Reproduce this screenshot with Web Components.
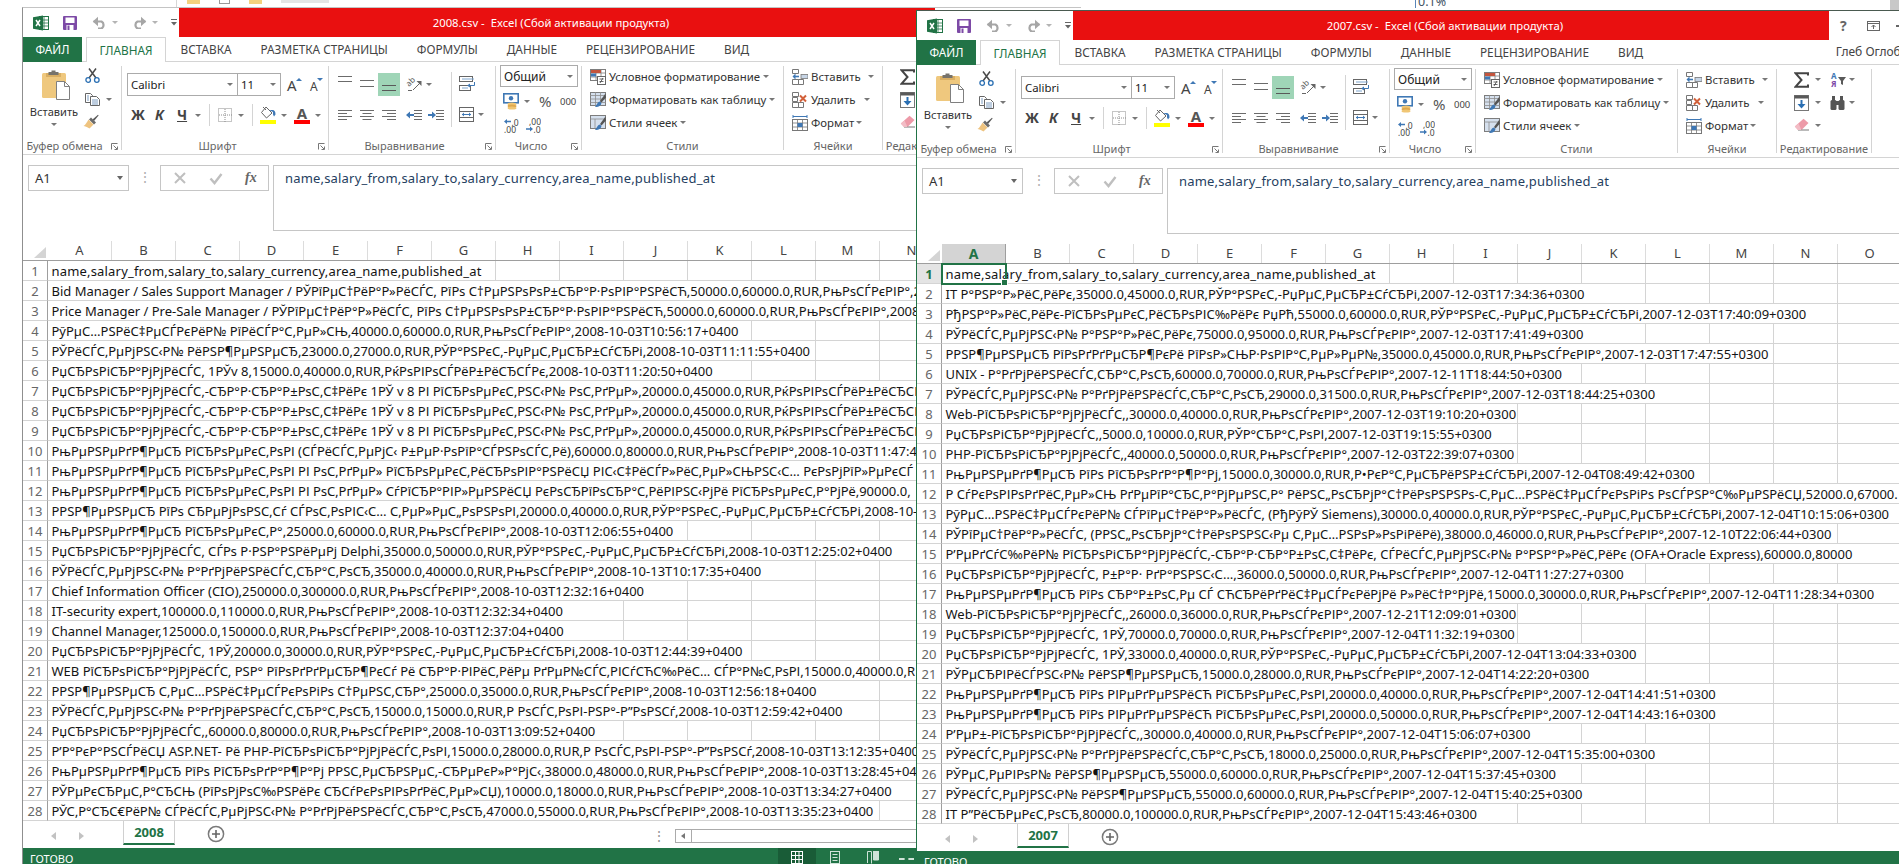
<!doctype html>
<html lang="ru"><head><meta charset="utf-8"><title>Excel</title>
<style>
html,body{margin:0;height:864px;overflow:hidden;background:#fff;font-family:"Noto Sans",sans-serif}
xl-window{position:absolute}
#w8{left:22px;top:7px;width:1059px;--edge:#8f8f8f;--topedge:#c4c4c4}
#w7{left:916px;top:10px;width:1100px;--edge:#217346;--topedge:#4a5a50}
</style></head><body>
<xl-backdrop></xl-backdrop>
<xl-window id="w8" file="2008.csv" sheet="2008"></xl-window>
<xl-window id="w7" file="2007.csv" sheet="2007" active></xl-window>
<script>
const cp="ЂЃ‚ѓ„…†‡€‰Љ‹ЊЌЋЏђ‘’“”•–—\u0098™љ›њќћџ\u00a0ЎўЈ¤Ґ¦§Ё©Є«¬\u00ad®Ї°±Ііґµ¶·ё№є»јЅѕї";
function mj(s){let o='';for(const b of new TextEncoder().encode(s)){if(b<128)o+=String.fromCharCode(b);else if(b<192){const c=cp[b-128];if(c!='\u0098')o+=c}else o+=String.fromCharCode(0x410+b-192)}return o}
const HEAD='name,salary_from,salary_to,salary_currency,area_name,published_at';
const DATA={
'2008':[
'Bid Manager / Sales Support Manager / Специалист по ценообразованию,50000.0,60000.0,RUR,Москва,2',
'Price Manager / Pre-Sale Manager / Специалист по ценообразованию,50000.0,60000.0,RUR,Москва,2008',
'Технический писатель,40000.0,60000.0,RUR,Москва,2008-10-03T10:56:17+0400',
'Системный инженер,23000.0,27000.0,RUR,Санкт-Петербург,2008-10-03T11:11:55+0400',
'Программист 1Сv 8,15000.0,40000.0,RUR,Новосибирск,2008-10-03T11:20:50+0400',
'Программист-разработчик 1С v 8 в проектный отдел,20000.0,45000.0,RUR,Новосибирс',
'Программист-разработчик 1С v 8 в проектный отдел,20000.0,45000.0,RUR,Новосибирс',
'Программист-разработчик 1С v 8 в проектный отдел,20000.0,45000.0,RUR,Новосибирс',
'Менеджер проектов (системы безопасности),60000.0,80000.0,RUR,Москва,2008-10-03T11:47:4',
'Менеджер проектов в отдел проектирования вычислительных комплекс',
'Менеджер проектов в отдел управления корпоративными проектами,90000.0,',
'Инженер по ремонту сотовых телефонов,20000.0,40000.0,RUR,Санкт-Петербург,2008-10-',
'Менеджер проекта,25000.0,60000.0,RUR,Москва,2008-10-03T12:06:55+0400',
'Программист со знанием Delphi,35000.0,50000.0,RUR,Санкт-Петербург,2008-10-03T12:25:02+0400',
'Системный администратор,35000.0,40000.0,RUR,Москва,2008-10-13T10:17:35+0400',
'Chief Information Officer (CIO),250000.0,300000.0,RUR,Москва,2008-10-03T12:32:16+0400',
'IT-security expert,100000.0,110000.0,RUR,Москва,2008-10-03T12:32:34+0400',
'Channel Manager,125000.0,150000.0,RUR,Москва,2008-10-03T12:37:04+0400',
'Программист 1С,20000.0,30000.0,RUR,Санкт-Петербург,2008-10-03T12:44:39+0400',
'WEB программист на поддержку и развитие действующих сайтов,15000.0,40000.0,R',
'Инженер технического центра,25000.0,35000.0,RUR,Москва,2008-10-03T12:56:18+0400',
'Системный администратор,15000.0,15000.0,RUR,Ростов-на-Дону,2008-10-03T12:59:42+0400',
'Программист,60000.0,80000.0,RUR,Москва,2008-10-03T13:09:52+0400',
'Вакансия ASP.NET- и PHP-программистов,15000.0,28000.0,RUR,Ростов-на-Дону,2008-10-03T13:12:35+0400',
'Менеджер по продажам Интернет-рекламы,38000.0,48000.0,RUR,Москва,2008-10-03T13:28:45+040',
'Секретарь (помощник руководителя),10000.0,18000.0,RUR,Москва,2008-10-03T13:34:27+0400',
'Старший системный администратор,47000.0,55000.0,RUR,Москва,2008-10-03T13:35:23+0400'],
'2007':[
'IT аналитик,35000.0,45000.0,RUR,Санкт-Петербург,2007-12-03T17:34:36+0300',
'Аналитик-проектировщик ПО,55000.0,60000.0,RUR,Санкт-Петербург,2007-12-03T17:40:09+0300',
'Системный аналитик,75000.0,95000.0,RUR,Москва,2007-12-03T17:41:49+0300',
'Инженер поддержки пользователей,35000.0,45000.0,RUR,Москва,2007-12-03T17:47:55+0300',
'UNIX - администратор,60000.0,70000.0,RUR,Москва,2007-12-11T18:44:50+0300',
'Системный администратор,29000.0,31500.0,RUR,Москва,2007-12-03T18:44:25+0300',
'Web-программист,30000.0,40000.0,RUR,Москва,2007-12-03T19:10:20+0300',
'Программист,5000.0,10000.0,RUR,Саратов,2007-12-03T19:15:55+0300',
'PHP-программист,40000.0,50000.0,RUR,Москва,2007-12-03T22:39:07+0300',
'Менеджер по продажам,15000.0,30000.0,RUR,Екатеринбург,2007-12-04T08:49:42+0300',
'Руководитель департамента информационно-технического оснащения,52000.0,67000.',
'Технический специалист (АТС Siemens),30000.0,40000.0,RUR,Санкт-Петербург,2007-12-04T10:15:06+0300',
'Специалист (Информационные технологии),38000.0,46000.0,RUR,Москва,2007-12-10T22:06:44+0300',
'Ведущий программист-разработчик, системный аналитик (OFA+Oracle Express),60000.0,80000',
'Программист баз данных,36000.0,50000.0,RUR,Москва,2007-12-04T11:27:27+0300',
'Менеджер по работе с юридическими лицами,15000.0,30000.0,RUR,Москва,2007-12-04T11:28:34+0300',
'Web-программист,26000.0,36000.0,RUR,Москва,2007-12-21T12:09:01+0300',
'Программист 1С,70000.0,70000.0,RUR,Москва,2007-12-04T11:32:19+0300',
'Программист 1С,33000.0,40000.0,RUR,Санкт-Петербург,2007-12-04T13:04:33+0300',
'Сервисный инженер,15000.0,28000.0,RUR,Москва,2007-12-04T14:22:20+0300',
'Менеджер по ведению проектов,20000.0,40000.0,RUR,Москва,2007-12-04T14:41:51+0300',
'Менеджер по ведению проектов,20000.0,50000.0,RUR,Москва,2007-12-04T14:43:16+0300',
'Веб-программист,30000.0,40000.0,RUR,Москва,2007-12-04T15:06:07+0300',
'Системный администратор,18000.0,25000.0,RUR,Москва,2007-12-04T15:35:00+0300',
'Сетевой инженер,55000.0,60000.0,RUR,Москва,2007-12-04T15:37:45+0300',
'Системный инженер,55000.0,60000.0,RUR,Москва,2007-12-04T15:40:25+0300',
'IT Директор,80000.0,100000.0,RUR,Москва,2007-12-04T15:43:46+0300']};

const svg=(w,h,b)=>`<svg width="${w}" height="${h}" viewBox="0 0 ${w} ${h}" style="display:block;flex:none">${b}</svg>`;
const L='stroke="#6b6b6b" fill="none"';
const I={
excel:svg(16,16,`<rect x="6.5" y="1.5" width="9" height="13" fill="#fff" stroke="#217346"/><path d="M7 5h8M7 8h8M7 11h8M11 2v12" stroke="#217346" stroke-width=".8"/><path d="M0 2.2 10 .4v15.2L0 13.8z" fill="#217346"/><path d="M3 5l4 6M7 5l-4 6" stroke="#fff" stroke-width="1.5"/>`),
save:svg(14,14,`<rect width="14" height="14" rx="1" fill="#7d4aa6"/><rect x="2.5" y="1.5" width="9" height="5.5" fill="#fff"/><rect x="3.5" y="9" width="7" height="5" fill="#fff"/><rect x="4.5" y="9.5" width="2" height="4.5" fill="#7d4aa6"/>`),
undo:svg(15,13,`<path d="M1.5 5.5h8a4 4 0 0 1 0 7H6" fill="none" stroke="#a6a6a6" stroke-width="2.2"/><path d="M6 .8 .8 5.5 6 10.2z" fill="#a6a6a6"/>`),
redo:svg(15,13,`<path d="M13.5 5.5h-8a4 4 0 0 0 0 7H9" fill="none" stroke="#a6a6a6" stroke-width="2.2"/><path d="M9 .8 14.2 5.5 9 10.2z" fill="#a6a6a6"/>`),
qat:svg(6,7,`<path d="M0 .5h6" stroke="#666"/><path d="M0 3h6L3 6.5z" fill="#666"/>`),
paste:svg(28,30,`<rect y="3" width="24" height="25" rx="1.5" fill="#efc87e"/><rect x="4" y="3" width="15" height="4" fill="#d9ae62"/><path d="M6.5 5V2h3V.5h4V2h3v3z" fill="#77736b"/><path d="M14.5 11.5h8l5 5v13h-13z" fill="#fff" stroke="#7f7f7f"/><path d="M22.5 11.5v5h5" fill="none" stroke="#7f7f7f"/>`),
cut:svg(15,15,`<path d="M4 10 11 .5M11 10 4 .5" stroke="#4a4a4a" stroke-width="1.5"/><circle cx="3.2" cy="12" r="2.3" fill="none" stroke="#2a6fb3" stroke-width="1.3"/><circle cx="11.8" cy="12" r="2.3" fill="none" stroke="#2a6fb3" stroke-width="1.3"/>`),
copy:svg(15,13,`<path d="M.5.5h5l2 2v7h-7z" fill="#fff" stroke="#666"/><path d="M5.5 3.5h6l3 3v6h-9z" fill="#fff" stroke="#666"/><path d="M7 7h6M7 9h6M7 11h6M2 3h2M2 5h2M2 7h2" stroke="#7d9cc0"/>`),
brush:svg(16,15,`<path d="M9.5 5.5 15 .8l.6.6L11 7z" fill="#5a5a5a"/><path d="M8 3.5l5 5-2 2-5-5z" fill="#6b6b6b"/><path d="M5.5 5.5l5 5-4 4C4 13 2 12 .5 12c2-1 3.5-4 5-6.5z" fill="#eec37f"/>`),
launch:svg(7,7,`<path d="M.5 6.5v-6h6" fill="none" stroke="#777"/><path d="M2.5 2.5l3.5 3.5M6.5 3.5v3h-3" fill="none" stroke="#777"/>`),
border:svg(14,15,`<rect x=".5" y=".5" width="13" height="13" fill="none" stroke="#8d8d8d" stroke-dasharray="1 1"/><path d="M7 1v13M1 7h13" stroke="#8d8d8d" stroke-dasharray="1 1"/>`),
fill:svg(16,14,`<path d="M6 1 1.5 6.5 6.5 12 12 7z" fill="#fff" stroke="#666"/><path d="M3 1 6 4" stroke="#666"/><path d="M9 4h3.5c2 0 3 1.5 3 4.5l-1.5 2-1-2L13 6z" fill="#3f78b5"/>`),
t:svg(14,23,`<path d="M0 3.5h14M0 8.5h14" ${L}/>`),
m:svg(14,23,`<path d="M0 7.5h14M0 13.5h14" ${L}/>`),
b:svg(14,23,`<path d="M0 12.5h14M0 17.5h14" stroke="#595959" fill="none"/>`),
al:svg(14,14,`<path d="M0 2.5h14M0 5.5h9M0 8.5h14M0 11.5h9" ${L}/>`),
ac:svg(14,14,`<path d="M0 2.5h14M2.5 5.5h9M0 8.5h14M2.5 11.5h9" ${L}/>`),
ar:svg(14,14,`<path d="M0 2.5h14M5 5.5h9M0 8.5h14M5 11.5h9" ${L}/>`),
ind1:svg(16,14,`<path d="M8 2.5h8M8 5.5h8M8 8.5h8M8 11.5h8" ${L}/><path d="M0 7l4-3.5V6h4v2H4v2.5z" fill="#3f78b5"/>`),
ind2:svg(16,14,`<path d="M8 2.5h8M8 5.5h8M8 8.5h8M8 11.5h8" ${L}/><path d="M8 7 4 3.5V6H0v2h4v2.5z" fill="#3f78b5"/>`),
orient:svg(16,16,`<text transform="translate(3 10) rotate(-45)" font-size="8" font-family="Noto Sans" fill="#555">ab</text><path d="M2 13.5h4M7 13l7-7" stroke="#666" fill="none"/><path d="M15.5 4v5l-5-5z" fill="#666"/>`),
wrap:svg(16,16,`<rect x=".5" y=".5" width="13" height="5" fill="none" stroke="#666"/><rect x=".5" y="9.5" width="11" height="5" fill="none" stroke="#666"/><path d="M3 3h12M3 12h6" stroke="#7fa6cf"/><path d="M15.5 6v3.5H9" stroke="#3f78b5" fill="none"/><path d="M11 7.5 8 9.5l3 2z" fill="#3f78b5"/>`),
merge:svg(15,15,`<rect x=".5" y=".5" width="14" height="14" fill="#fff" stroke="#666"/><path d="M0 4.5h15M0 10.5h15" stroke="#666"/><path d="M3 7.5h9" stroke="#3f78b5"/><path d="M5 5.5 3 7.5l2 2zM10 5.5l2 2-2 2z" fill="#3f78b5"/>`),
cur:svg(16,17,`<rect x=".8" y=".8" width="14.4" height="9" fill="#fff" stroke="#3f78b5" stroke-width="1.6"/><circle cx="8" cy="5.3" r="2.2" fill="#3f78b5"/><ellipse cx="9" cy="11" rx="4.5" ry="1.6" fill="#f0c674"/><ellipse cx="9" cy="13" rx="4.5" ry="1.6" fill="#dfa94e"/><ellipse cx="9" cy="15" rx="4.5" ry="1.6" fill="#f0c674"/>`),
incdec:svg(15,15,`<path d="M0 3.5 3 1v1.8h4v1.4H3V6z" fill="#3f78b5"/><text x="7.5" y="7.5" font-size="8.5" font-family="Noto Sans" fill="#444">,0</text><text x="0" y="14.5" font-size="8.5" font-family="Noto Sans" fill="#444">,00</text>`),
decdec:svg(15,15,`<text x="3" y="7" font-size="8.5" font-family="Noto Sans" fill="#444">,00</text><path d="M7 11 4 8.5v1.8H0v1.4h4v1.8z" fill="#3f78b5"/><text x="7.5" y="14.5" font-size="8.5" font-family="Noto Sans" fill="#444">,0</text>`),
cf:svg(16,16,`<rect x=".5" y=".5" width="15" height="11" fill="#fff" stroke="#7d7d7d"/><path d="M0 4h15M6 0v11M11 0v11M0 8h10" stroke="#7d7d7d" stroke-width=".8"/><rect x="1" y="1" width="10" height="3" fill="#c4553d"/><rect x="1" y="4.5" width="5" height="3" fill="#3f78b5"/><rect x="7.5" y="7.5" width="8" height="8" fill="#fff" stroke="#666"/><path d="M9.5 10h4M9.5 12.5h4M10 14l3-5" stroke="#444" stroke-width=".8"/>`),
tf:svg(16,16,`<rect x=".5" y=".5" width="15" height="13" fill="#d5e0ee" stroke="#7d7d7d"/><path d="M0 3.5h16M0 7h16M0 10.5h16M5.5 0v14M10.5 0v14" stroke="#8d8d8d" stroke-width=".8"/><path d="M15.5 1.5 10 9l1.5 1.5 4.5-5z" fill="#555"/><path d="M10 9.5c-2 0-3 3-5 5.5 3 .5 6-1 6.5-4z" fill="#3f78b5"/>`),
cs:svg(16,16,`<rect x=".5" y=".5" width="15" height="13" fill="#d5e0ee" stroke="#7d7d7d"/><path d="M0 4h16M5 4v10" stroke="#8d8d8d" stroke-width=".8"/><path d="M15.5 1.5 10 9l1.5 1.5 4.5-5z" fill="#555"/><path d="M10 9.5c-2 0-3 3-5 5.5 3 .5 6-1 6.5-4z" fill="#3f78b5"/>`),
ci:svg(16,16,`<path d="M.5.5h6v4h-6zM.5 10.5h6v5h-6zM6.5 10.5h5v5h-5z" fill="#fff" stroke="#777"/><rect x="9" y="5.5" width="7" height="4" fill="#c7d5e6" stroke="#777" stroke-width=".8"/><path d="M7 7.5H2" stroke="#3f78b5" stroke-width="1.6"/><path d="M3.5 4.5 .5 7.5l3 3z" fill="#3f78b5"/>`),
cd:svg(16,16,`<path d="M.5.5h6v4h-6zM.5 10.5h6v5h-6zM6.5 10.5h5v5h-5z" fill="#fff" stroke="#777"/><path d="M.5 5.5h5v4h-5z" fill="#fff" stroke="#777"/><path d="M8 3.5l6 6M14 3.5l-6 6" stroke="#d2603a" stroke-width="2"/>`),
cfm:svg(16,16,`<path d="M1 1.5h14" stroke="#3f78b5"/><path d="M1 0v3M15 0v3" stroke="#3f78b5"/><rect x=".5" y="4.5" width="15" height="11" fill="#fff" stroke="#777"/><path d="M0 8h16M0 12h16M5.5 4v12M10.5 4v12" stroke="#777" stroke-width=".8"/><rect x="5.5" y="8" width="5" height="4" fill="#3f78b5"/>`),
sum:svg(15,16,`<path d="M14 3.5V1.2H1.5L7.5 8 1.5 14.8H14v-2.4" fill="none" stroke="#444" stroke-width="2"/>`),
fillc:svg(15,16,`<rect x=".5" y=".5" width="14" height="15" fill="#fff" stroke="#777"/><rect x=".5" y=".5" width="14" height="3" fill="#595959"/><path d="M7.5 5v7" stroke="#2a6fb3" stroke-width="2"/><path d="M3.5 9h8l-4 4.5z" fill="#2a6fb3"/>`),
erase:svg(15,15,`<path d="M9.5.8 14.5 5 7.5 12H4L.8 8.5z" fill="#ed9aa8"/><path d="M4 12h11" stroke="#777"/><path d="M.8 8.5 4 12h3.5L4.5 5.5z" fill="#f2bcc5"/>`),
sort:svg(16,16,`<text x="1" y="7" font-size="8" font-weight="700" font-family="Noto Sans" fill="#3f78b5">А</text><text x="1" y="15" font-size="8" font-weight="700" font-family="Noto Sans" fill="#7d4aa6">Я</text><path d="M8 5h8l-3 4v4l-2-1V9z" fill="#595959"/>`),
find:svg(15,14,`<rect x=".5" y="4" width="6" height="10" rx="1.5" fill="#555"/><rect x="8.5" y="4" width="6" height="10" rx="1.5" fill="#555"/><rect x="2" y="0" width="3" height="5" fill="#555"/><rect x="10" y="0" width="3" height="5" fill="#555"/><rect x="6" y="5" width="3" height="4" fill="#555"/>`),
restore:svg(13,10,`<rect x=".5" y=".5" width="12" height="9" fill="none" stroke="#666"/><path d="M.5 2.5h12" stroke="#666"/><path d="M6.5 8V4M4.5 6l2-2 2 2" fill="none" stroke="#666"/>`),
x:svg(14,14,`<path d="M2 2l10 10M12 2 2 12" stroke="#bfbfbf" stroke-width="2"/>`),
ok:svg(14,14,`<path d="M1.5 7.5 5.5 12 12.5 3" fill="none" stroke="#bfbfbf" stroke-width="2.4"/>`),
grid:svg(12,13,`<rect x=".5" y=".5" width="11" height="12" fill="none" stroke="#fff"/><path d="M0 4.5h12M0 8.5h12M4.5 0v13M8 0v13" stroke="#fff"/>`),
page:svg(10,13,`<rect x=".5" y=".5" width="9" height="12" fill="none" stroke="#cfe3d8"/><path d="M2.5 3.5h5M2.5 6.5h5M2.5 9.5h5" stroke="#cfe3d8"/>`),
brk:svg(12,13,`<path d="M.5 12V.5h4v12M6.5 0h5v9h-5z" fill="none" stroke="#cfe3d8"/><rect x="7" y="0" width="4" height="9" fill="#cfe3d8"/>`),
plus:svg(18,18,`<circle cx="9" cy="9" r="7.6" fill="none" stroke="#7a7a7a" stroke-width="1.5"/><path d="M9 5v8M5 9h8" stroke="#666" stroke-width="1.6"/>`),
folder:svg(13,10,`<rect y="0" width="13" height="10" fill="#f3d27f"/>`),
};

class XlBackdrop extends HTMLElement{connectedCallback(){const r=this.attachShadow({mode:'open'});r.innerHTML=`<style>
:host{position:absolute;inset:0}
.w{position:absolute;left:176px;top:0;height:8px;width:1240px;border-left:1px solid #d6d6d6;overflow:hidden;background:#fff;display:flex;gap:19px;padding-left:10px;box-sizing:border-box}
.w>*{margin-top:-6px}
.t{width:48px;height:9px;background:#e4e4e4}
.p{position:absolute;left:1415px;top:0;height:8px;overflow:hidden;border-left:1px solid #5a86b8;font:12.5px/8px "Noto Sans",sans-serif;color:#456;padding-left:2px}
.p span{display:block;margin-top:-2px}
.c{position:absolute;left:1890px;top:0;width:9px;height:10px;background:#c8c8c8}
</style><div class="w">${I.folder}<span style="width:11px;height:10px;border:1px solid #999;background:#fff;display:block;box-sizing:border-box"></span>${I.folder}<span class="t"></span></div><div class="p"><span>0.1%</span></div><div class="c"></div>`}}
customElements.define('xl-backdrop',XlBackdrop);

class XlTitle extends HTMLElement{connectedCallback(){const r=this.attachShadow({mode:'open'});r.innerHTML=`<style>
:host{display:flex;height:29px;align-items:center;background:#fff;font-family:"Noto Sans",sans-serif}
.i{display:flex;align-items:center;width:156px;flex:none;padding-left:10px;box-sizing:border-box;height:29px}
.band{width:756px;flex:none;height:29px;background:#e91010;color:#fff;font-size:11.3px;display:flex;align-items:center;justify-content:center;padding-right:12px;box-sizing:border-box;white-space:pre}
.r{display:flex;align-items:center;margin-left:11px;color:#666}
.q{font-size:14px;font-weight:700;width:27px}
.m{margin-left:16px;width:10px;height:2px;background:#666}
.c{display:inline-block;width:0;height:0;border:3px solid transparent;border-top:3.5px solid #b4b4b4;border-bottom:0}
</style><div class="i">${I.excel}<span style="width:14px"></span>${I.save}<span style="width:15px"></span>${I.undo}<span style="width:5px"></span><i class="c"></i><span style="width:14px"></span>${I.redo}<span style="width:5px"></span><i class="c"></i><span style="width:13px"></span>${I.qat}</div>
<div class="band">${this.getAttribute('file')} -  Excel (Сбой активации продукта)</div>
<div class="r">${this.hasAttribute('wide')?`<span class="q">?</span>${I.restore}<span class="m"></span>`:''}</div>`}}
customElements.define('xl-title',XlTitle);

class XlTabs extends HTMLElement{connectedCallback(){const r=this.attachShadow({mode:'open'});r.innerHTML=`<style>
:host{display:flex;height:25px;box-sizing:border-box;border-bottom:1px solid #d4d4d4;background:#fff;font:11.8px/24px "Noto Sans",sans-serif;color:#444;white-space:nowrap}
.f{width:59px;height:25px;background:#217346;color:#fff;text-align:center;flex:none}
.h{margin-left:4px;width:80px;height:25px;box-sizing:border-box;border:1px solid #d4d4d4;border-bottom:0;background:#fff;color:#217346;text-align:center;flex:none}
span{padding:0 14.5px}
.u{margin-left:178px;padding:0;color:#444;font-size:12px}
</style><div class="f">ФАЙЛ</div><div class="h">ГЛАВНАЯ</div><span>ВСТАВКА</span><span>РАЗМЕТКА СТРАНИЦЫ</span><span>ФОРМУЛЫ</span><span>ДАННЫЕ</span><span>РЕЦЕНЗИРОВАНИЕ</span><span>ВИД</span>${this.hasAttribute('wide')?'<span class="u">Глеб Оглоблин</span>':''}`}}
customElements.define('xl-tabs',XlTabs);

class XlGroup extends HTMLElement{connectedCallback(){const r=this.attachShadow({mode:'open'});const w=this.getAttribute('w'),lau=this.hasAttribute('launcher');r.innerHTML=`<style>
:host{display:flex;flex-direction:column;flex:none;width:${w}px;height:84px;margin-top:4px;box-sizing:border-box;border-right:1px solid #d4d4d4;position:relative}
.b{height:73px;flex:none;min-width:0}
.l{height:14px;margin-bottom:-3px;text-align:center;font-size:11px;line-height:14px;color:#666;white-space:nowrap;padding-right:${lau?15:0}px}
.x{position:absolute;right:3px;bottom:0}
</style><div class="b"><slot></slot></div><div class="l">${this.getAttribute('label')}</div>${lau?`<div class="x">${I.launch}</div>`:''}`}}
customElements.define('xl-group',XlGroup);

class XlRibbon extends HTMLElement{connectedCallback(){const r=this.attachShadow({mode:'open'});r.innerHTML=`<style>
:host{display:flex;height:93px;box-sizing:border-box;border-bottom:1px solid #d4d4d4;background:#fff;font:11.4px "Noto Sans",sans-serif;color:#444;overflow:hidden}
.c{display:inline-block;flex:none;width:0;height:0;border:3px solid transparent;border-top:3.5px solid #777;border-bottom:0}
.row{display:flex;align-items:center}
.paste{width:62px;display:flex;flex-direction:column;align-items:center;padding-top:4px;flex:none;box-sizing:border-box}
.paste svg{margin-left:4px}
.paste span{line-height:15px;margin-top:4px;color:#333;font-size:11.1px}
.paste .c{margin-top:4px}
.tools{padding-left:0;display:flex;flex-direction:column}
.box{height:23px;box-sizing:border-box;border:1px solid #ababab;display:flex;align-items:center;justify-content:space-between;padding:0 4px 0 3px;font-size:11.4px;color:#222;background:#fff}
.cell{width:22px;height:23px;display:flex;align-items:center;justify-content:center;flex:none;box-sizing:border-box}
.on{background:#9fd5b7}
.sep{width:1px;background:#d4d4d4;flex:none}
.fb{font-weight:700;font-size:14px;color:#444;line-height:20px}
.list{margin-top:-1px}
.list>div{height:23px;display:flex;align-items:center;white-space:nowrap}
.list span{color:#333}
</style>
<xl-group w="99" label="Буфер обмена" launcher><div class="row" style="align-items:flex-start">
<div class="paste">${I.paste}<span>Вставить</span><i class="c"></i></div>
<div class="tools"><div style="margin-top:2px">${I.cut}</div><div class="row" style="margin-top:10px">${I.copy}<i class="c" style="margin-left:6px"></i></div><div style="margin:8px 0 0 -2px">${I.brush}</div></div>
</div></xl-group>
<xl-group w="207" label="Шрифт" launcher>
<div class="row" style="margin:7px 0 0 5px">
<div class="box" style="width:111px">Calibri<i class="c"></i></div><div class="box" style="width:44px;margin-left:-1px">11<i class="c"></i></div>
<span style="margin-left:6px;font-size:15px;width:13px;position:relative;color:#444">A<b style="position:absolute;right:-2px;top:3px;border:3px solid transparent;border-bottom:3px solid #3f78b5;border-top:0"></b></span>
<span style="margin-left:10px;font-size:12px;width:12px;position:relative;color:#444;padding-top:3px">A<b style="position:absolute;right:-1px;top:3px;border:3px solid transparent;border-top:3px solid #3f78b5;border-bottom:0"></b></span>
</div>
<div class="row" style="margin-top:8px;height:22px">
<span class="fb" style="margin-left:9px;width:13px">Ж</span>
<span class="fb" style="margin-left:11px;width:8px;font-style:italic">К</span>
<span class="fb" style="margin-left:14px;width:10px;text-decoration:underline">Ч</span>
<i class="c" style="margin-left:8px"></i>
<i class="sep" style="margin-left:8px;height:22px"></i>
<span style="margin-left:8px">${I.border}</span>
<i class="c" style="margin-left:6px"></i>
<i class="sep" style="margin-left:8px;height:22px"></i>
<span style="margin-left:7px;width:16px"><span style="display:block">${I.fill}</span><b style="display:block;height:4px;background:#ffff00"></b></span>
<i class="c" style="margin-left:5px"></i>
<span style="margin-left:7px;width:16px;text-align:center;font-size:15px;font-weight:700;line-height:14px;color:#555">A<b style="display:block;height:4px;background:#f00"></b></span>
<i class="c" style="margin-left:5px"></i>
</div>
</xl-group>
<xl-group w="167" label="Выравнивание" launcher><div class="row" style="align-items:flex-start">
<div style="width:122px;flex:none;padding-left:5px;box-sizing:border-box">
<div class="row" style="margin-top:7px"><div class="cell">${I.t}</div><div class="cell">${I.m}</div><div class="cell on">${I.b}</div><span style="margin-left:6px">${I.orient}</span><i class="c" style="margin-left:4px"></i></div>
<div class="row" style="margin-top:8px;height:22px"><div class="cell">${I.al}</div><div class="cell">${I.ac}</div><div class="cell">${I.ar}</div><span style="margin-left:6px">${I.ind1}</span><span style="margin-left:6px">${I.ind2}</span></div>
</div>
<i class="sep" style="height:55px;margin-top:6px"></i>
<div style="padding-left:7px"><div style="margin-top:10px">${I.wrap}</div><div class="row" style="margin-top:15px">${I.merge}<i class="c" style="margin-left:4px"></i></div></div>
</div></xl-group>
<xl-group w="86" label="Число" launcher>
<div class="box" style="width:78px;height:22px;margin:-1px 0 0 4px;border-width:1px;font-size:12px">Общий<i class="c"></i></div>
<div class="row" style="margin:4px 0 0 7px">${I.cur}<i class="c" style="margin-left:5px"></i><span style="margin-left:9px;font-size:15px;color:#555;width:14px">%</span><span style="margin-left:7px;font-size:9.5px">000</span></div>
<div class="row" style="margin:7px 0 0 8px">${I.incdec}<span style="margin-left:7px">${I.decdec}</span></div>
</xl-group>
<xl-group w="202" label="Стили"><div class="list" style="padding-left:8px">
<div>${I.cf}<span style="margin-left:3px">Условное форматирование</span><i class="c" style="margin-left:3px"></i></div>
<div>${I.tf}<span style="margin-left:3px">Форматировать как таблицу</span><i class="c" style="margin-left:3px"></i></div>
<div>${I.cs}<span style="margin-left:3px">Стили ячеек</span><i class="c" style="margin-left:3px"></i></div>
</div></xl-group>
<xl-group w="99" label="Ячейки"><div class="list" style="padding-left:8px">
<div>${I.ci}<span style="margin-left:3px;width:54px">Вставить</span><i class="c" style="margin-left:3px"></i></div>
<div>${I.cd}<span style="margin-left:3px;width:50px">Удалить</span><i class="c" style="margin-left:3px"></i></div>
<div>${I.cfm}<span style="margin-left:3px;width:42px">Формат</span><i class="c" style="margin-left:3px"></i></div>
</div></xl-group>
<xl-group w="95" label="Редактирование"><div class="list" style="padding-left:17px">
<div>${I.sum}<i class="c" style="margin-left:6px"></i><span style="margin-left:9px">${I.sort}</span><i class="c" style="margin-left:3px"></i></div>
<div>${I.fillc}<i class="c" style="margin-left:6px"></i><span style="margin-left:9px">${I.find}</span><i class="c" style="margin-left:4px"></i></div>
<div>${I.erase}<i class="c" style="margin-left:6px"></i></div>
</div></xl-group>`}}
customElements.define('xl-ribbon',XlRibbon);

class XlFormula extends HTMLElement{connectedCallback(){const r=this.attachShadow({mode:'open'});r.innerHTML=`<style>
:host{display:flex;height:86px;padding:10px 0 0 5px;box-sizing:border-box;background:#fff;font-family:"Noto Sans",sans-serif;align-items:flex-start}
.n{width:101px;height:26px;box-sizing:border-box;border:1px solid #c6c6c6;display:flex;align-items:center;justify-content:space-between;padding:0 5px 0 6px;font-size:13px;color:#333}
.c{width:0;height:0;border:3.5px solid transparent;border-top:4px solid #666;border-bottom:0}
.d{width:31px;height:25px;text-align:center;color:#b0b0b0;font-size:14px;line-height:23px;flex:none}
.fx{width:109px;height:26px;box-sizing:border-box;border:1px solid #c6c6c6;display:flex;align-items:center;padding-left:12px;gap:22px;font:italic 700 14px "Liberation Serif",serif;color:#666}
.v{flex:1;margin-left:4px;height:66px;box-sizing:border-box;border:1px solid #c6c6c6;border-right:0;padding:2px 0 0 11px;font-size:13px;letter-spacing:.18px;line-height:20px;color:#25405f;white-space:nowrap}
</style><div class="n">A1<i class="c"></i></div><div class="d">⋮</div><div class="fx">${I.x}${I.ok}<span>fx</span></div><div class="v">${HEAD}</div>`}}
customElements.define('xl-formula',XlFormula);

class XlGrid extends HTMLElement{connectedCallback(){const r=this.attachShadow({mode:'open'});
const rows=[HEAD,...DATA[this.getAttribute('sheet')].map(mj)],act=this.hasAttribute('active');
const cx=document.createElement('canvas').getContext('2d');cx.font='13px "Noto Sans"';
const cols='ABCDEFGHIJKLMNOP'.split('');
let h=`<div class="hd"><div class="cor"><i></i></div>`+cols.map((c,i)=>`<div class="ch${act&&!i?' sel':''}">${c}</div>`).join('')+`</div>`;
rows.forEach((t,i)=>{const w=cx.measureText(t).width+(i?0:12)+4;const k=Math.min(16,Math.max(1,Math.ceil(w/64)));
h+=`<div class="row"><div class="rh${act&&!i?' sel':''}">${i+1}</div><div class="cell t${i?'':' h'}" style="grid-column:span ${k}">${t}</div>${'<div class="cell"></div>'.repeat(16-k)}</div>`});
r.innerHTML=`<style>
:host{display:block;position:relative;background:#fff;font-family:"Noto Sans",sans-serif;overflow:hidden;height:580px}
.hd,.row{display:grid;grid-template-columns:25px repeat(16,64px);width:max-content}
.hd{height:20px;box-sizing:border-box;border-bottom:1px solid #9e9e9e}
.cor{position:relative}
.cor i{position:absolute;right:2px;bottom:2px;border-left:12px solid transparent;border-bottom:11px solid #d4d4d4}
.ch{border-right:1px solid #dcdcdc;text-align:center;font-size:13px;line-height:19px;color:#444;box-sizing:border-box;height:19px}
.ch.sel{background:#d4d4d4;color:#217346;font-weight:700;font-size:14px;border-right-color:#9e9e9e}
.row{height:20px}
.rh{border-right:1px solid #9e9e9e;border-bottom:1px solid #d4d4d4;text-align:center;font-size:13px;line-height:21px;color:#666;box-sizing:border-box;height:20px}
.rh.sel{background:#e4e4e4;color:#217346;font-weight:700}
.cell{border-right:1px solid #d4d4d4;border-bottom:1px solid #d4d4d4;box-sizing:border-box;height:20px}
.t{font-size:13px;line-height:21px;padding-left:3.5px;white-space:pre;color:#141414;overflow:visible;min-width:0}
.t.h{letter-spacing:.18px}
.s{position:absolute;left:24px;top:19px;width:66px;height:22px;box-sizing:border-box;border:2px solid #217346}
.s i{position:absolute;right:-3px;bottom:-3px;width:5px;height:5px;background:#217346;border:1px solid #fff;box-sizing:content-box}
</style>${h}${act?'<div class="s"><i></i></div>':''}`}}
customElements.define('xl-grid',XlGrid);

class XlSheetbar extends HTMLElement{connectedCallback(){const r=this.attachShadow({mode:'open'});r.innerHTML=`<style>
:host{display:flex;height:27px;background:#fff;align-items:flex-start;font-family:"Noto Sans",sans-serif;position:relative}
.a{width:0;height:0;border:4px solid transparent;margin-top:11px}
.l{border-right:5px solid #c2c2c2;border-left:0;margin-left:28px}
.rr{border-left:5px solid #c2c2c2;border-right:0;margin-left:23px}
.tab{margin-left:39px;width:52px;height:24px;box-sizing:border-box;border:1px solid #d0d0d0;border-top:0;border-bottom:2.5px solid #217346;color:#217346;font-weight:700;font-size:13px;line-height:23px;text-align:center;background:#fff}
.p{margin:4px 0 0 32px}
.sb{display:${this.hasAttribute('wide')?'none':'flex'};margin:5px 0 0 427px;align-items:center;flex:none}
.sb em{color:#999;font-style:normal;font-size:14px;width:23px}
.tr{width:300px;height:14px;box-sizing:border-box;border:1px solid #ababab;display:flex;align-items:center;padding-left:5px}
.tr i{width:0;height:0;border:3.5px solid transparent;border-right:4px solid #777;border-left:0}
.tr b{width:1px;height:14px;background:#ababab;margin-left:6px}
</style><i class="a l"></i><i class="a rr"></i><div class="tab">${this.getAttribute('sheet')}</div><div class="p">${I.plus}</div><div class="sb"><em>⋮</em><div class="tr"><i></i><b></b></div></div>`}}
customElements.define('xl-sheetbar',XlSheetbar);

class XlStatus extends HTMLElement{connectedCallback(){const r=this.attachShadow({mode:'open'});r.innerHTML=`<style>
:host{display:flex;height:22px;background:#217346;color:#fff;font:11px/22px "Noto Sans",sans-serif;align-items:flex-start}
span{margin-left:7px}
.v{display:${this.hasAttribute('wide')?'none':'flex'};margin-left:705px;height:22px;align-items:flex-start}
.hl{width:38px;height:22px;background:#195c37;display:flex;justify-content:center;padding-top:3px;box-sizing:border-box}
.o{margin:3px 0 0 14px}
.z{margin:10px 0 0 20px;width:15px;border-top:2px dashed #cfe3d8}
</style><span>ГОТОВО</span><div class="v"><div class="hl">${I.grid}</div><div class="o">${I.page}</div><div class="o" style="margin-left:27px">${I.brk}</div><div class="z"></div></div>`}}
customElements.define('xl-status',XlStatus);

class XlWindow extends HTMLElement{connectedCallback(){const r=this.attachShadow({mode:'open'});
const f=this.getAttribute('file'),s=this.getAttribute('sheet'),a=this.hasAttribute('active');const W=a?'wide':'';
r.innerHTML=`<style>
:host{display:flex;flex-direction:column;height:863px;box-sizing:border-box;border-left:1px solid var(--edge);border-top:1px solid var(--topedge);background:#fff;overflow:hidden}
</style><xl-title file="${f}" ${W}></xl-title><xl-tabs ${W}></xl-tabs><xl-ribbon></xl-ribbon><xl-formula></xl-formula>
<xl-grid sheet="${s}" ${a?'active':''}></xl-grid><xl-sheetbar sheet="${s}" ${W}></xl-sheetbar><xl-status ${W}></xl-status>`}}
customElements.define('xl-window',XlWindow);
</script></body></html>
